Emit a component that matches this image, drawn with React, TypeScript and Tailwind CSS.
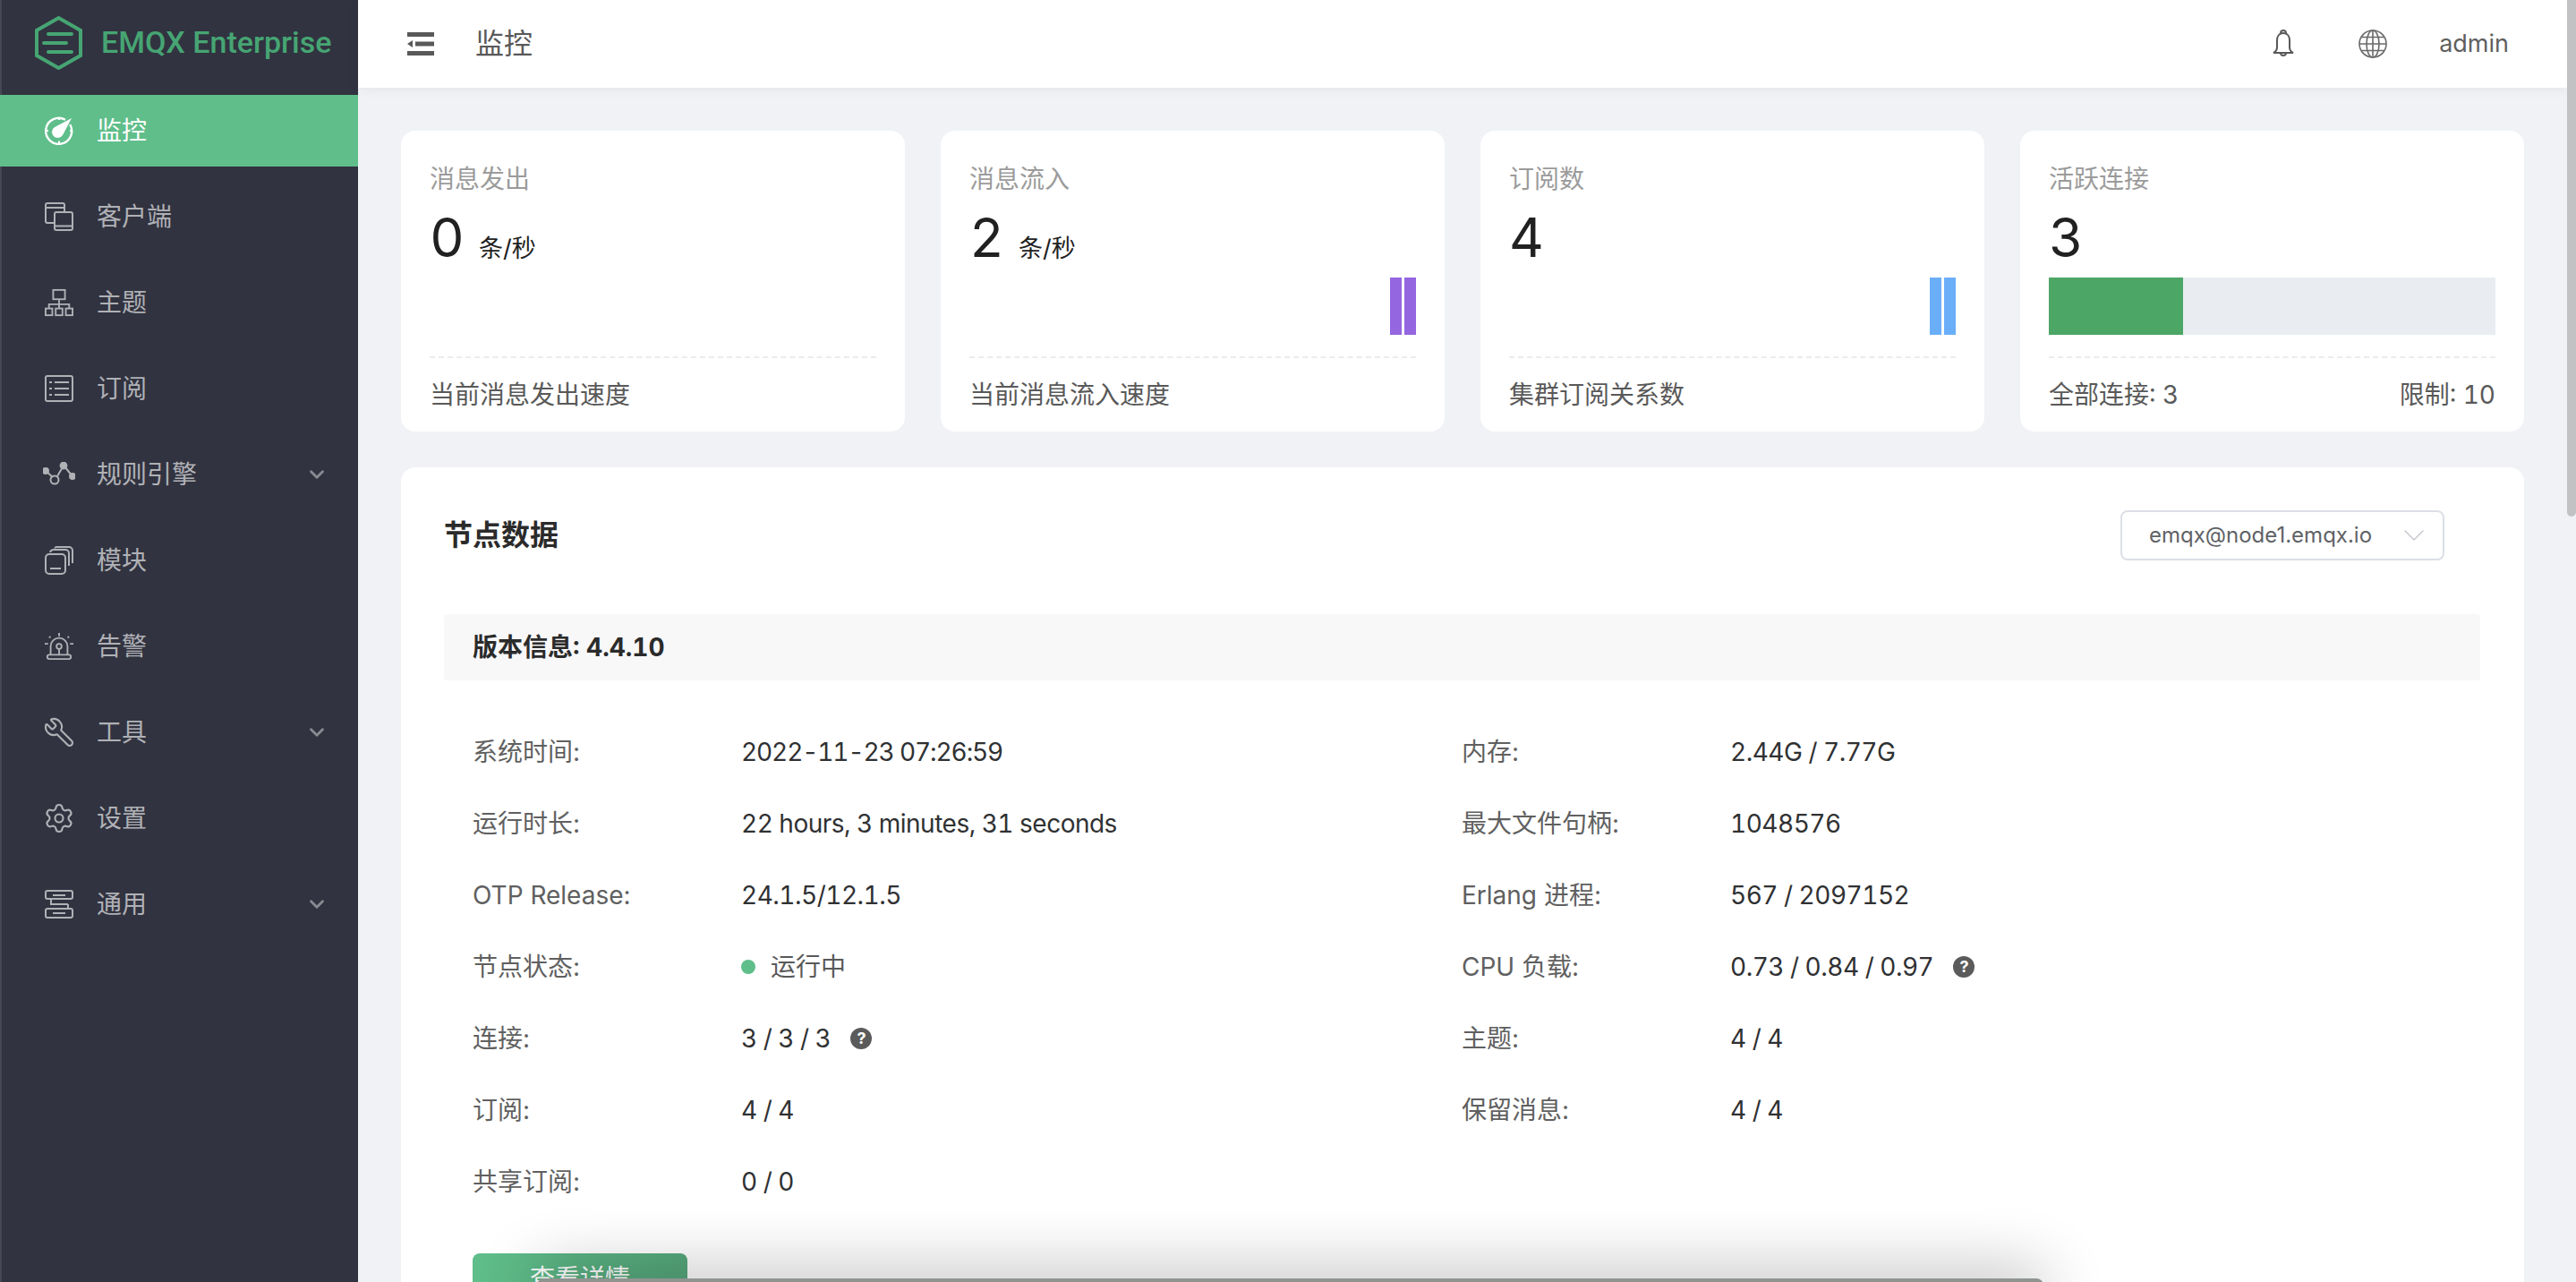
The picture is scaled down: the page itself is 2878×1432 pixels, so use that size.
import { Settings, Wrench, ChevronDown } from "lucide-react";
import type { ReactNode } from "react";

const sans = "font-['Inter','Noto_Sans_CJK_SC',sans-serif]";

const GaugeIcon = () => (
  <svg viewBox="0 0 32 32" className="w-8 h-8" fill="none" stroke="#fff" strokeWidth="2.4">
    <path d="M23 3.800A14.500 14.500 0 1 0 28.200 9" />
    <path d="M30 2 20 21a6.500 6.500 0 1 1-8-9.500Z" fill="#fff" stroke="none" />
    <path d="M16 1v3M16 27.500V31M1 16h3M28 16h3" strokeWidth="2" />
  </svg>
);

const ClientIcon = () => (
  <svg viewBox="0 0 32 32" className="w-8 h-8" fill="none" stroke="currentColor" strokeWidth="2">
    <path d="M10 23H3a2 2 0 0 1-2-2V3a2 2 0 0 1 2-2h17a2 2 0 0 1 2 2v9" />
    <path d="M1 6h21" />
    <rect x="11" y="11" width="20" height="20" rx="2" fill="#313340" />
    <path d="M11 26.500h20" />
  </svg>
);

const TopicIcon = () => (
  <svg viewBox="0 0 34 32" className="w-[34px] h-8" fill="none" stroke="currentColor" strokeWidth="2">
    <rect x="10" y="1" width="14" height="11" />
    <path d="M17 12v11M5 23v-5h24v5" />
    <rect x="1" y="23" width="8" height="8" />
    <rect x="13" y="23" width="8" height="8" />
    <rect x="25" y="23" width="8" height="8" />
  </svg>
);

const SubscribeIcon = () => (
  <svg viewBox="0 0 32 32" className="w-8 h-8" fill="none" stroke="currentColor" strokeWidth="2">
    <rect x="1" y="2" width="30" height="28" rx="2" />
    <path d="M5 9h3M11 9h16M5 16h3M11 16h16M5 23h3M11 23h16" />
  </svg>
);

const RuleIcon = () => (
  <svg viewBox="0 0 36 28" className="w-9 h-7 shrink-0" fill="none" stroke="currentColor" strokeWidth="2">
    <path d="M3 10 11 17M16 16 23 4M24 5 33 16" />
    <circle cx="3" cy="10" r="3" fill="currentColor" />
    <circle cx="23" cy="4" r="3.400" fill="currentColor" />
    <circle cx="33" cy="16" r="3" fill="currentColor" />
    <circle cx="13" cy="20" r="4.500" />
  </svg>
);

const ModuleIcon = () => (
  <svg viewBox="0 0 32 32" className="w-8 h-8" fill="none" stroke="currentColor" strokeWidth="2">
    <rect x="1" y="9" width="22" height="22" rx="4" />
    <path d="M6 7a4 4 0 0 1 4-3h13a4 4 0 0 1 4 4v14" />
    <path d="M11 2a4 4 0 0 1 3-1h13a4 4 0 0 1 4 4v14" />
    <path d="M6 25h12" />
  </svg>
);

const AlarmIcon = () => (
  <svg viewBox="0 0 34 32" className="w-[34px] h-8" fill="none" stroke="currentColor" strokeWidth="2">
    <path d="M7 26V16a10 10 0 0 1 20 0v10" />
    <rect x="3" y="26" width="28" height="5" rx="2.500" />
    <circle cx="17" cy="16" r="3" />
    <path d="M17 19v7M17 0v4M0 13h4M30 13h4" />
    <circle cx="6" cy="5" r="1.200" fill="currentColor" stroke="none" />
    <circle cx="28" cy="5" r="1.200" fill="currentColor" stroke="none" />
  </svg>
);

const GeneralIcon = () => (
  <svg viewBox="0 0 32 32" className="w-8 h-8" fill="none" stroke="currentColor" strokeWidth="2">
    <rect x="1" y="1" width="30" height="9" rx="2" />
    <rect x="1" y="21" width="30" height="10" rx="2" />
    <path d="M7 10v6h19M26 16v5M9 6h14M9 26h14" />
  </svg>
);

const menu: { label: string; icon: ReactNode; arrow?: boolean; active?: boolean }[] = [
  { label: "监控", icon: <GaugeIcon />, active: true },
  { label: "客户端", icon: <ClientIcon /> },
  { label: "主题", icon: <TopicIcon /> },
  { label: "订阅", icon: <SubscribeIcon /> },
  { label: "规则引擎", icon: <RuleIcon />, arrow: true },
  { label: "模块", icon: <ModuleIcon /> },
  { label: "告警", icon: <AlarmIcon /> },
  { label: "工具", icon: <Wrench className="w-9 h-9 shrink-0 -scale-x-100" strokeWidth={1.4} />, arrow: true },
  { label: "设置", icon: <Settings className="w-9 h-9 shrink-0" strokeWidth={1.4} /> },
  { label: "通用", icon: <GeneralIcon />, arrow: true },
];

const Sidebar = () => (
  <aside className="w-[400px] shrink-0 h-full bg-[#313340] border-l-2 border-[#464853]">
    <div className="h-[106px] flex items-start pl-[37px] pt-[18px]">
      <svg viewBox="0 0 53 60" className="w-[53px] h-[60px]" fill="none" stroke="#46a573" strokeWidth="4">
        <path d="M26.500 2 51 16v28L26.500 58 2 44V16Z" />
        <path d="M15 20h26M10 30h25M15 40h26" strokeLinecap="round" />
      </svg>
      <span className="ml-[21px] mt-[5px] text-[34px] leading-[48px] font-medium text-[#46a573] font-['Roboto',sans-serif]">
        EMQX Enterprise
      </span>
    </div>
    {menu.map((item) => (
      <div
        key={item.label}
        className={
          item.active
            ? "h-20 mb-4 -ml-0.5 pl-[50px] pr-[33px] flex items-center bg-[#5fbe8a] text-white"
            : "h-20 mb-4 pl-12 pr-[33px] flex items-center text-[#b0b1b6]"
        }
      >
        <span className="w-8 h-8 flex items-center justify-center">{item.icon}</span>
        <span className={`ml-[26px] flex-1 text-[28px] ${sans}`}>{item.label}</span>
        {item.arrow && <ChevronDown className="w-[26px] h-[26px] text-[#8a8b92]" strokeWidth={2.6} />}
      </div>
    ))}
  </aside>
);

const Header = () => (
  <header className="h-[98px] bg-white shadow-[0_2px_12px_rgba(0,0,0,0.06)] flex items-center pl-[55px] pr-[65px] relative">
    <svg viewBox="0 0 30 26" className="w-[30px] h-[26px]" fill="#595959">
      <rect width="30" height="5" />
      <rect x="9" y="10.500" width="21" height="5" />
      <rect y="21" width="30" height="5" />
      <path d="M0 13 6 9v8Z" />
    </svg>
    <span className={`ml-[46px] text-[32px] text-[#595959] ${sans}`}>监控</span>
    <div className="flex-1" />
    <svg viewBox="0 0 26 32" className="w-[26px] h-8" fill="none" stroke="#595959" strokeWidth="2">
      <path d="M13 4c-5 0-7 4-7 8v8c0 3-2 5-4 6h22c-2-1-4-3-4-6v-8c0-4-2-8-7-8Z" />
      <path d="M10 4a3 3 0 0 1 6 0M10 26a3 3 0 0 0 6 0" />
    </svg>
    <svg viewBox="0 0 32 32" className="w-8 h-8 ml-[71px]" fill="none" stroke="#6a6a6a" strokeWidth="1.600">
      <circle cx="16" cy="16" r="15" />
      <ellipse cx="16" cy="16" rx="7" ry="15" />
      <path d="M16 1v30M1 16h30M3.500 8.500h25M3.500 23.500h25" />
    </svg>
    <span className={`ml-[58px] text-[27px] text-[#5f5f5f] ${sans}`}>admin</span>
  </header>
);

const Bars = ({ color }: { color: string }) => (
  <div className="h-16 flex justify-end gap-[3px]">
    <div className={`w-[13px] h-full ${color}`} />
    <div className={`w-[13px] h-full ${color}`} />
  </div>
);

const StatCard = ({
  title,
  value,
  unit,
  chart,
  footer,
}: {
  title: string;
  value: string;
  unit?: string;
  chart?: ReactNode;
  footer: ReactNode;
}) => (
  <div className={`h-[336px] bg-white rounded-2xl px-8 pt-[34px] tabular-nums ${sans}`}>
    <div className="text-[28px] leading-10 text-[#9b9b9b]">{title}</div>
    <div className="mt-2.5 h-[70px] flex items-baseline text-[#212121]">
      <span className="text-[60px] leading-[70px]">{value}</span>
      {unit && <span className="ml-4 text-[27px]">{unit}</span>}
    </div>
    <div className="mt-2.5 h-16">{chart}</div>
    <div className="mt-6 border-t-2 border-dashed border-[#ececec] pt-[21px] text-[28px] leading-10 text-[#595959]">
      {footer}
    </div>
  </div>
);

const Help = () => (
  <span className="ml-[22px] w-6 h-6 rounded-full bg-[#5b5b5b] text-white text-[18px] leading-6 font-bold text-center">
    ?
  </span>
);

const rows: [string, ReactNode][] = [
  ["系统时间:", <span className="tracking-[-1.1px]">2022-11-23 07:26:59</span>],
  ["内存:", "2.44G / 7.77G"],
  ["运行时长:", "22 hours, 3 minutes, 31 seconds"],
  ["最大文件句柄:", "1048576"],
  ["OTP Release:", "24.1.5/12.1.5"],
  ["Erlang 进程:", "567 / 2097152"],
  [
    "节点状态:",
    <span className="flex items-center text-[#595959] tracking-normal">
      <span className="w-4 h-4 rounded-full bg-[#5fbe8a] mr-[17px]" />
      运行中
    </span>,
  ],
  [
    "CPU 负载:",
    <span className="flex items-center">
      0.73 / 0.84 / 0.97
      <Help />
    </span>,
  ],
  [
    "连接:",
    <span className="flex items-center">
      3 / 3 / 3
      <Help />
    </span>,
  ],
  ["主题:", "4 / 4"],
  ["订阅:", "4 / 4"],
  ["保留消息:", "4 / 4"],
  ["共享订阅:", "0 / 0"],
];

const NodeCard = () => (
  <div className={`mt-10 bg-white rounded-t-2xl pl-12 pr-[49px] pt-12 h-[1000px] ${sans}`}>
    <div className="h-14 flex items-center justify-between pr-10">
      <h2 className="text-[32px] font-semibold text-[#2b2b2b]">节点数据</h2>
      <div className="w-[362px] h-14 border-2 border-[#dcdfe6] rounded-lg flex items-center pl-[30px] pr-3 justify-between text-[24px] text-[#606266]">
        emqx@node1.emqx.io
        <ChevronDown className="w-10 h-10 text-[#c0c4cc]" strokeWidth={0.8} />
      </div>
    </div>
    <div className="mt-[60px] h-[74px] bg-[#f8f8f9] rounded flex items-center px-8 text-[28px] font-bold tabular-nums text-[#2b2b2b]">
      版本信息: 4.4.10
    </div>
    <div className="mt-10 pl-8 grid grid-cols-[1105px_1fr] text-[28px]">
      {rows.map(([label, value]) => (
        <div key={label} className="h-20 flex items-center">
          <span className="w-[300px] text-[#606060]">{label}</span>
          <span className="text-[#303133] tabular-nums tracking-[-0.5px]">{value}</span>
        </div>
      ))}
    </div>
    <button className="mt-10 ml-8 w-60 h-14 rounded-lg bg-gradient-to-r from-[#5fbe8a] to-[#56a87c] text-white text-[28px]">
      查看详情
    </button>
  </div>
);

export default function App() {
  return (
    <div className="relative w-full h-screen overflow-hidden flex bg-[#f0f2f6]">
      <Sidebar />
      <div className="flex-1 h-full pr-2.5">
        <Header />
        <main className="px-12 pt-12">
          <div className="grid grid-cols-4 gap-10">
            <StatCard title="消息发出" value="0" unit="条/秒" footer="当前消息发出速度" />
            <StatCard
              title="消息流入"
              value="2"
              unit="条/秒"
              chart={<Bars color="bg-[#9466e0]" />}
              footer="当前消息流入速度"
            />
            <StatCard title="订阅数" value="4" chart={<Bars color="bg-[#6baef8]" />} footer="集群订阅关系数" />
            <StatCard
              title="活跃连接"
              value="3"
              chart={
                <div className="h-16 bg-[#e9ecf0]">
                  <div className="h-full w-[30%] bg-[#4ca665]" />
                </div>
              }
              footer={
                <div className="flex justify-between">
                  <span>全部连接: 3</span>
                  <span>限制: 10</span>
                </div>
              }
            />
          </div>
          <NodeCard />
        </main>
      </div>
      {/* scrollbar thumb */}
      <div className="absolute top-0 right-0 w-2.5 h-[577px] bg-[#c2c2c4] rounded-b-md" />
      {/* window peeking from the bottom edge */}
      <div className="absolute top-[1428px] left-[600px] w-[1683px] h-10 bg-[#8f9490] rounded-t-lg shadow-[0_-6px_70px_rgba(0,0,0,0.32)]" />
    </div>
  );
}
